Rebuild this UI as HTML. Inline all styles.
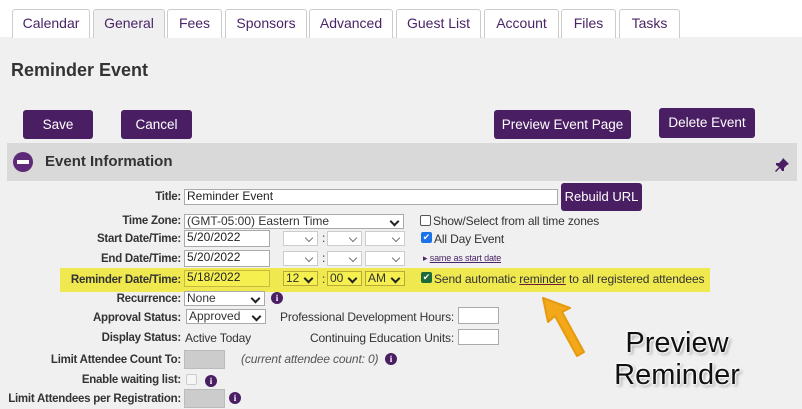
<!DOCTYPE html>
<html><head><style>
*{margin:0;padding:0;box-sizing:border-box}
body{width:802px;height:409px;background:#f0f0f0;font-family:"Liberation Sans",sans-serif;position:relative;overflow:hidden;color:#333}
.a{position:absolute}
.top{left:0;top:0;width:802px;height:37px;background:#fff}
.tab{position:absolute;top:9px;height:29px;border:1px solid #ccc;border-bottom:none;border-radius:3px 3px 0 0;background:#fff;color:#4a2466;font-size:14px;text-align:center;line-height:26px}
.tab.on{background:#f0f0f0;top:9px;height:29px}
.btn{position:absolute;background:#4a1e62;color:#fff;font-size:13.5px;border-radius:3px;text-align:center}
.lbl{position:absolute;right:621px;font-size:11.5px;font-weight:bold;color:#333;white-space:nowrap;letter-spacing:-0.25px}
.t{position:absolute;font-size:12px;color:#333;white-space:nowrap;letter-spacing:-0.15px}
.in{position:absolute;background:#fff;border:1px solid #aaa;font-size:12px;padding-left:2px;line-height:13px;color:#222}
.sel{position:absolute;background:#fff;border:1px solid #aaa;font-size:12px;padding-left:2px;line-height:13px}
.sel:after{content:"";position:absolute;right:5px;top:3px;width:5px;height:5px;border-right:2px solid #222;border-bottom:2px solid #222;transform:rotate(45deg)}
.sel.e{border-color:#ccc}.sel.e:after{border-color:#777;border-width:1.5px}
.info{position:absolute;width:12px;height:12px;border-radius:50%;background:#4a1e62;color:#fff;font-size:9px;font-weight:bold;text-align:center;line-height:12px;font-family:"Liberation Serif",serif}
.gbox{position:absolute;background:#ccc;border:1px solid #bbb}
</style></head><body>
<div class="a top"></div>
<div class="tab" style="left:12px;width:78px">Calendar</div>
<div class="tab on" style="left:93px;width:72px">General</div>
<div class="tab" style="left:167px;width:55px">Fees</div>
<div class="tab" style="left:225px;width:82px">Sponsors</div>
<div class="tab" style="left:309px;width:84px">Advanced</div>
<div class="tab" style="left:396px;width:85px">Guest List</div>
<div class="tab" style="left:484px;width:75px">Account</div>
<div class="tab" style="left:561px;width:55px">Files</div>
<div class="tab" style="left:619px;width:61px">Tasks</div>

<div class="a" style="left:11px;top:60px;font-size:18px;font-weight:bold;color:#333">Reminder Event</div>

<div class="btn" style="left:23px;top:110px;width:70px;height:29px;line-height:29px">Save</div>
<div class="btn" style="left:121px;top:110px;width:71px;height:29px;line-height:29px">Cancel</div>
<div class="btn" style="left:494px;top:110px;width:137px;height:29px;line-height:29px">Preview Event Page</div>
<div class="btn" style="left:659px;top:108px;width:96px;height:30px;line-height:29px">Delete Event</div>

<div class="a" style="left:7px;top:143px;width:790px;height:38px;background:#d9d9d9"></div>
<div class="a" style="left:13px;top:152px;width:20px;height:20px;border-radius:50%;background:#5d2a78"></div>
<div class="a" style="left:17px;top:160px;width:12px;height:4px;background:#fff"></div>
<div class="a" style="left:45px;top:153px;font-size:15px;font-weight:bold;color:#333">Event Information</div>
<svg class="a" style="left:774px;top:157px" width="16" height="16" viewBox="0 0 16 16"><path d="M9 1l6 6-2 1-3 3 0 3-2 0-2-3-4 4-1-1 4-4-3-2 0-2 3 0 3-3z" fill="#4a1e62"/></svg>

<div class="lbl" style="top:191px">Title:</div>
<div class="in" style="left:184px;top:189px;width:374px;height:16px">Reminder Event</div>
<div class="btn" style="left:561px;top:183px;width:81px;height:28px;line-height:28px;font-size:13px">Rebuild URL</div>

<div class="lbl" style="top:215px">Time Zone:</div>
<div class="sel" style="left:184px;top:214px;width:220px;height:15px">(GMT-05:00) Eastern Time</div>
<div class="a" style="left:420px;top:215px;width:11px;height:11px;border:1px solid #555;border-radius:2px;background:#fff"></div>
<div class="t" style="left:433px;top:214px">Show/Select from all time zones</div>

<div class="lbl" style="top:233px">Start Date/Time:</div>
<div class="in" style="left:184px;top:230px;width:86px;height:17px">5/20/2022</div>
<div class="sel e" style="left:283px;top:231px;width:35px;height:15px"></div><div class="t" style="left:322px;top:231px">:</div>
<div class="sel e" style="left:327px;top:231px;width:35px;height:15px"></div>
<div class="sel e" style="left:365px;top:231px;width:40px;height:15px"></div>
<div class="a" style="left:421px;top:232px;width:11px;height:11px;border-radius:2px;background:#1a73e8;color:#fff;font-size:9px;line-height:11px;text-align:center">✔</div>
<div class="t" style="left:434px;top:232px">All Day Event</div>

<div class="lbl" style="top:253px">End Date/Time:</div>
<div class="in" style="left:184px;top:250px;width:86px;height:17px">5/20/2022</div>
<div class="sel e" style="left:283px;top:251px;width:35px;height:15px"></div><div class="t" style="left:322px;top:251px">:</div>
<div class="sel e" style="left:327px;top:251px;width:35px;height:15px"></div>
<div class="sel e" style="left:365px;top:251px;width:40px;height:15px"></div>
<div class="t" style="left:423px;top:253px;font-size:9px;color:#4a2466">▸ <u>same as start date</u></div>

<div class="a" style="left:60px;top:268px;width:650px;height:24px;background:#efe84f"></div>
<div class="lbl" style="top:274px">Reminder Date/Time:</div>
<div class="in" style="left:184px;top:270px;width:86px;height:17px;background:#f5ef50;border-color:#c8b940">5/18/2022</div>
<div class="sel" style="left:283px;top:271px;width:35px;height:15px;background:#f5ef50;border-color:#b9a93a">12</div><div class="t" style="left:322px;top:272px">:</div>
<div class="sel" style="left:327px;top:271px;width:35px;height:15px;background:#f5ef50;border-color:#b9a93a">00</div>
<div class="sel" style="left:365px;top:271px;width:40px;height:15px;background:#f5ef50;border-color:#b9a93a">AM</div>
<div class="a" style="left:421px;top:272px;width:11px;height:11px;border-radius:2px;background:#1d6b3a;color:#fff;font-size:9px;line-height:11px;text-align:center">✔</div>
<div class="t" style="left:434px;top:272px;letter-spacing:-0.1px">Send automatic <u style="text-decoration-color:#6b1a3a">reminder</u> to all registered attendees</div>

<div class="lbl" style="top:293px">Recurrence:</div>
<div class="sel" style="left:184px;top:291px;width:81px;height:15px">None</div>
<div class="info" style="left:271px;top:292px">i</div>

<div class="lbl" style="top:312px">Approval Status:</div>
<div class="sel" style="left:186px;top:309px;width:80px;height:15px">Approved</div>
<div class="t" style="left:280px;top:310px">Professional Development Hours:</div>
<div class="in" style="left:458px;top:307px;width:41px;height:17px"></div>

<div class="lbl" style="top:332px">Display Status:</div>
<div class="t" style="left:185px;top:331px">Active Today</div>
<div class="t" style="left:310px;top:331px">Continuing Education Units:</div>
<div class="in" style="left:458px;top:329px;width:41px;height:16px"></div>

<div class="lbl" style="top:354px">Limit Attendee Count To:</div>
<div class="gbox" style="left:184px;top:350px;width:41px;height:19px"></div>
<div class="t" style="left:241px;top:352px;font-style:italic;color:#555">(current attendee count: 0)</div>
<div class="info" style="left:385px;top:353px">i</div>

<div class="lbl" style="top:374px">Enable waiting list:</div>
<div class="a" style="left:186px;top:374px;width:11px;height:11px;border:1px solid #ccc;border-radius:2px;background:#f5f5f5"></div>
<div class="info" style="left:205px;top:375px">i</div>

<div class="lbl" style="top:393px">Limit Attendees per Registration:</div>
<div class="gbox" style="left:184px;top:389px;width:41px;height:19px"></div>
<div class="info" style="left:229px;top:392px">i</div>

<svg class="a" style="left:530px;top:285px" width="70" height="80" viewBox="0 0 70 80">
<path d="M13 8 L40 18 L32 22 L54 62 L47 66 L25 26 L18 32 Z" fill="#f3a81a" stroke="#e59a10" stroke-width="2" stroke-linejoin="round" transform="translate(0,5)"/>
</svg>
<div class="a" style="left:612px;top:327px;width:130px;text-align:center;font-size:29px;line-height:32px;color:#111;text-shadow:0 0 2px #fff,0 0 2px #fff,1px 1px 2px #fff,-1px -1px 2px #fff,2px 2px 3px #888">Preview<br>Reminder</div>
</body></html>
